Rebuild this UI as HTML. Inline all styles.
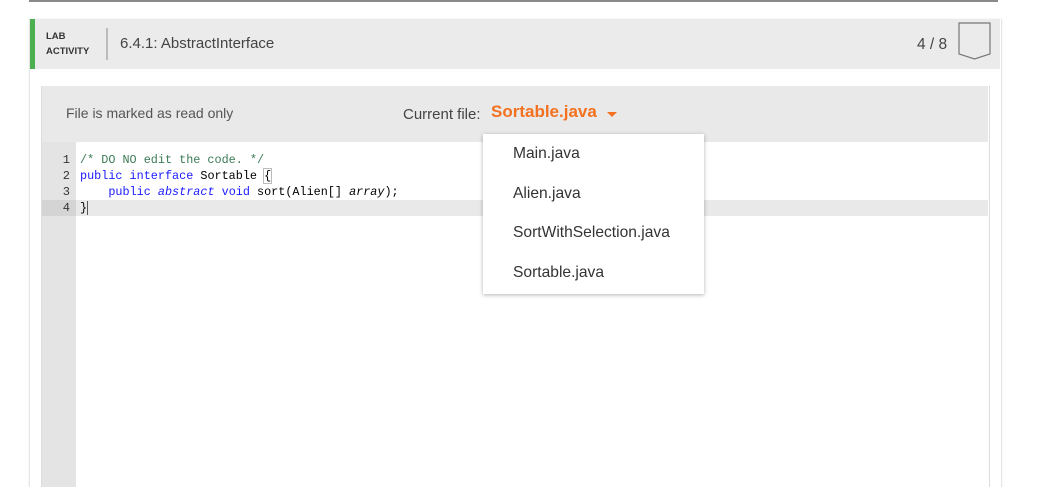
<!DOCTYPE html>
<html style="overflow:hidden;height:487px"><head><style>
body{margin:0;width:1046px;height:487px;background:#fff;position:relative;overflow:hidden;font-family:"Liberation Sans",sans-serif;}
.top{position:absolute;left:29px;top:0;width:969px;height:2px;background:#8a8a8a;}
.card{position:absolute;left:29px;top:19px;width:971px;height:480px;border-left:1px solid #e6e6e6;border-right:1px solid #e6e6e6;box-shadow:0 0 2px rgba(0,0,0,.08);}
.hdr{position:absolute;left:30px;top:19px;width:970px;height:50px;background:#ebebeb;}
.green{position:absolute;left:30px;top:19px;width:5px;height:50px;background:#4caf50;}
.lab{position:absolute;left:46px;top:29px;font-size:9.5px;font-weight:bold;color:#333;line-height:15px;}
.sep{position:absolute;left:106px;top:28px;width:2px;height:32px;background:#bbb;}
.title{position:absolute;left:120px;top:35px;font-size:15px;color:#444;}
.cnt{position:absolute;left:917px;top:36px;font-size:15.5px;color:#444;}
.panel{position:absolute;left:41px;top:86px;width:947px;height:420px;background:#fff;border-left:1px solid #ddd;border-right:1px solid #ddd;}
.ph{position:absolute;left:42px;top:86px;width:946px;height:56px;background:#e9e9e9;}
.ro{position:absolute;left:66px;top:105px;font-size:14px;color:#555;}
.cf{position:absolute;left:403px;top:106px;font-size:15px;color:#444;}
.sj{position:absolute;left:491px;top:102px;font-size:17px;font-weight:bold;color:#f3711f;}
.tri{position:absolute;left:607px;top:112px;width:0;height:0;border-left:5px solid transparent;border-right:5px solid transparent;border-top:5px solid #f3711f;}
.gut{position:absolute;left:42px;top:142px;width:34px;height:360px;background:#e4e4e4;}
.hl{position:absolute;left:42px;top:200px;width:946px;height:16px;background:#e9e9e9;}
.hlg{position:absolute;left:42px;top:200px;width:34px;height:16px;background:#d4d4d4;}
.code{position:absolute;left:42px;top:152px;font-family:"Liberation Mono",monospace;font-size:11.8px;line-height:16px;white-space:pre;color:#000;}
.ln{display:inline-block;width:28px;text-align:right;color:#333;margin-right:10px;font-size:12px;}
.c{color:#3a7a55}.k{color:#1a1aff}
.dd{position:absolute;left:483px;top:134px;width:221px;height:160px;background:#fff;box-shadow:0 1px 4px rgba(0,0,0,.3);}
.it{position:absolute;left:30px;font-size:15.6px;color:#333;}
</style></head><body>
<div class="top"></div>
<div class="card"></div>
<div class="hdr"></div><div class="green"></div>
<div class="lab">LAB<br>ACTIVITY</div>
<div class="sep"></div>
<div class="title">6.4.1: AbstractInterface</div>
<div class="cnt">4 / 8</div>
<svg style="position:absolute;left:958px;top:22px" width="34" height="40"><path d="M1 1H32V32L16.5 37L1 32Z" fill="none" stroke="#777" stroke-width="1.2"/></svg>
<div class="panel"></div>
<div class="ph"></div>
<div class="ro">File is marked as read only</div>
<div class="cf">Current file:</div>
<div class="sj">Sortable.java</div>
<div class="tri"></div>
<div class="gut"></div>
<div class="hl"></div><div class="hlg"></div>
<div class="code"><span class="ln">1</span><span class="c">/* DO NO edit the code. */</span>
<span class="ln">2</span><span class="k">public interface</span> Sortable <span style="outline:1px solid #bbb">{</span>
<span class="ln">3</span>    <span class="k">public <i>abstract</i> void</span> sort(Alien[] <i>array</i>);
<span class="ln">4</span>}<span style="border-left:1px solid #555"></span></div>
<div class="dd">
<div class="it" style="top:11px">Main.java</div>
<div class="it" style="top:51px">Alien.java</div>
<div class="it" style="top:90px">SortWithSelection.java</div>
<div class="it" style="top:130px">Sortable.java</div>
</div>
</body></html>
